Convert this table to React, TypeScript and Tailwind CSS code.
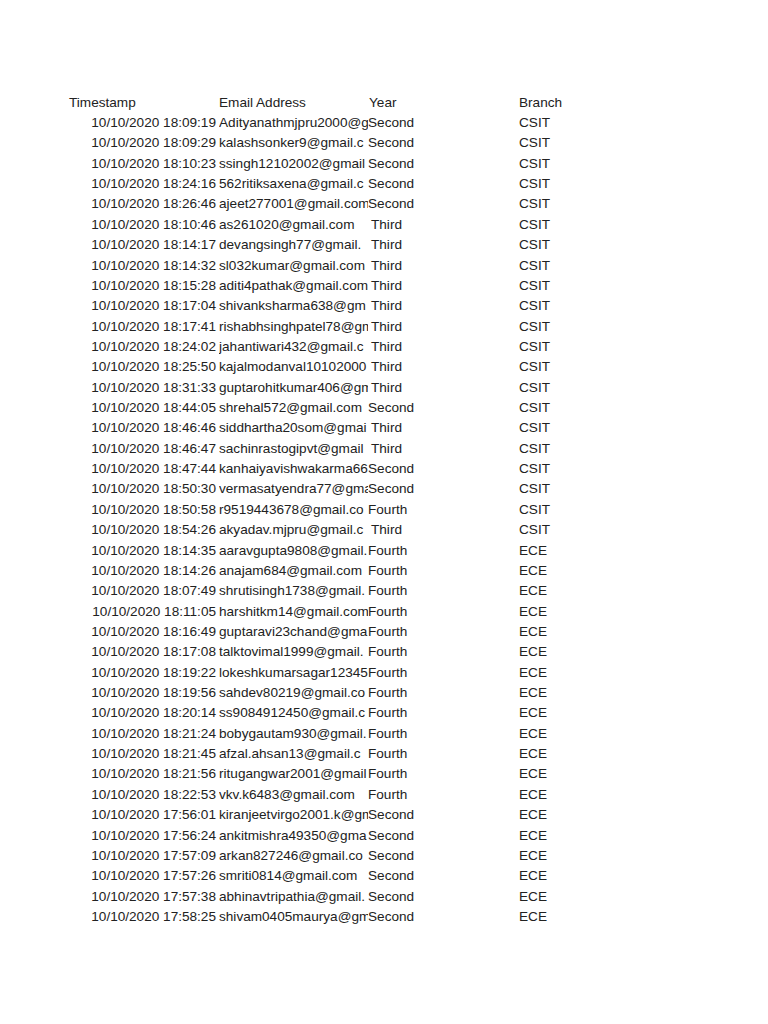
// email column shows only what fits before the Year column, as in the sheet export
const rows: [string, string, string, string][] = [
  ["10/10/2020 18:09:19", "Adityanathmjpru2000@g", "Second", "CSIT"],
  ["10/10/2020 18:09:29", "kalashsonker9@gmail.c", "Second", "CSIT"],
  ["10/10/2020 18:10:23", "ssingh12102002@gmail", "Second", "CSIT"],
  ["10/10/2020 18:24:16", "562ritiksaxena@gmail.c", "Second", "CSIT"],
  ["10/10/2020 18:26:46", "ajeet277001@gmail.com", "Second", "CSIT"],
  ["10/10/2020 18:10:46", "as261020@gmail.com", "Third", "CSIT"],
  ["10/10/2020 18:14:17", "devangsingh77@gmail.", "Third", "CSIT"],
  ["10/10/2020 18:14:32", "sl032kumar@gmail.com", "Third", "CSIT"],
  ["10/10/2020 18:15:28", "aditi4pathak@gmail.com", "Third", "CSIT"],
  ["10/10/2020 18:17:04", "shivanksharma638@gm", "Third", "CSIT"],
  ["10/10/2020 18:17:41", "rishabhsinghpatel78@gm", "Third", "CSIT"],
  ["10/10/2020 18:24:02", "jahantiwari432@gmail.c", "Third", "CSIT"],
  ["10/10/2020 18:25:50", "kajalmodanval10102000", "Third", "CSIT"],
  ["10/10/2020 18:31:33", "guptarohitkumar406@gm", "Third", "CSIT"],
  ["10/10/2020 18:44:05", "shrehal572@gmail.com", "Second", "CSIT"],
  ["10/10/2020 18:46:46", "siddhartha20som@gmai", "Third", "CSIT"],
  ["10/10/2020 18:46:47", "sachinrastogipvt@gmail", "Third", "CSIT"],
  ["10/10/2020 18:47:44", "kanhaiyavishwakarma66", "Second", "CSIT"],
  ["10/10/2020 18:50:30", "vermasatyendra77@gma", "Second", "CSIT"],
  ["10/10/2020 18:50:58", "r9519443678@gmail.co", "Fourth", "CSIT"],
  ["10/10/2020 18:54:26", "akyadav.mjpru@gmail.c", "Third", "CSIT"],
  ["10/10/2020 18:14:35", "aaravgupta9808@gmail.", "Fourth", "ECE"],
  ["10/10/2020 18:14:26", "anajam684@gmail.com", "Fourth", "ECE"],
  ["10/10/2020 18:07:49", "shrutisingh1738@gmail.", "Fourth", "ECE"],
  ["10/10/2020 18:11:05", "harshitkm14@gmail.com", "Fourth", "ECE"],
  ["10/10/2020 18:16:49", "guptaravi23chand@gma", "Fourth", "ECE"],
  ["10/10/2020 18:17:08", "talktovimal1999@gmail.", "Fourth", "ECE"],
  ["10/10/2020 18:19:22", "lokeshkumarsagar12345", "Fourth", "ECE"],
  ["10/10/2020 18:19:56", "sahdev80219@gmail.co", "Fourth", "ECE"],
  ["10/10/2020 18:20:14", "ss9084912450@gmail.c", "Fourth", "ECE"],
  ["10/10/2020 18:21:24", "bobygautam930@gmail.", "Fourth", "ECE"],
  ["10/10/2020 18:21:45", "afzal.ahsan13@gmail.c", "Fourth", "ECE"],
  ["10/10/2020 18:21:56", "ritugangwar2001@gmail", "Fourth", "ECE"],
  ["10/10/2020 18:22:53", "vkv.k6483@gmail.com", "Fourth", "ECE"],
  ["10/10/2020 17:56:01", "kiranjeetvirgo2001.k@gm", "Second", "ECE"],
  ["10/10/2020 17:56:24", "ankitmishra49350@gma", "Second", "ECE"],
  ["10/10/2020 17:57:09", "arkan827246@gmail.co", "Second", "ECE"],
  ["10/10/2020 17:57:26", "smriti0814@gmail.com", "Second", "ECE"],
  ["10/10/2020 17:57:38", "abhinavtripathia@gmail.", "Second", "ECE"],
  ["10/10/2020 17:58:25", "shivam0405maurya@gm", "Second", "ECE"],
]

const App = () => {
  return (
    <div className="min-h-[1024px] w-[768px] bg-white pt-[93px] pl-[69px] font-['Liberation_Sans',Arial,sans-serif] text-[13.6px] text-[#222]">
      <div className="flex h-[20px] items-center whitespace-nowrap">
        <div className="w-[150px]">Timestamp</div>
        <div className="w-[150px]">Email Address</div>
        <div className="w-[150px]">Year</div>
        <div>Branch</div>
      </div>
      {rows.map(([time, email, year, branch]) => (
        <div
          key={time + email}
          className="flex h-[20.36px] items-center whitespace-nowrap"
        >
          <div className="w-[150px] pr-[3px] text-right">{time}</div>
          <div className="w-[149px] overflow-hidden">{email}</div>
          <div className="w-[151px]">
            <span className={year === "Third" ? "pl-[3px]" : ""}>{year}</span>
          </div>
          <div>{branch}</div>
        </div>
      ))}
    </div>
  )
}

export default App
